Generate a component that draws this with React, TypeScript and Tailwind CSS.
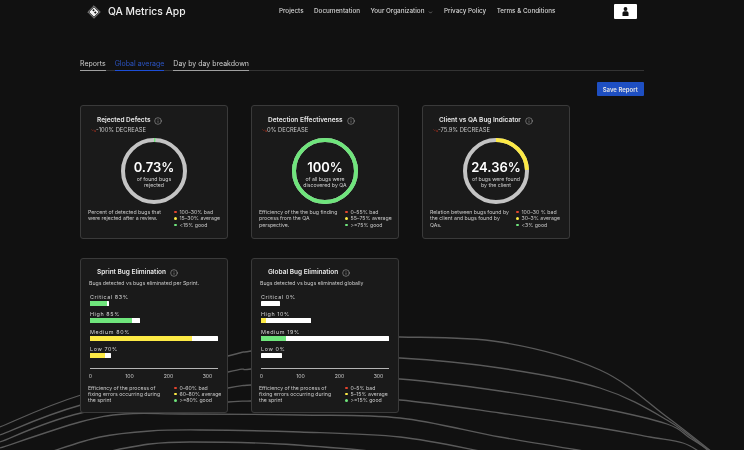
import React from "react";
import { ChevronDown, Info, TrendingDown } from "lucide-react";

type P = [number, number];
const smooth = (pts: P[]) => {
  let d = `M${pts[0][0]},${pts[0][1]}`;
  for (let i = 0; i < pts.length - 1; i++) {
    const p0 = pts[Math.max(i - 1, 0)];
    const p1 = pts[i];
    const p2 = pts[i + 1];
    const p3 = pts[Math.min(i + 2, pts.length - 1)];
    const c1 = [p1[0] + (p2[0] - p0[0]) / 6, p1[1] + (p2[1] - p0[1]) / 6];
    const c2 = [p2[0] - (p3[0] - p1[0]) / 6, p2[1] - (p3[1] - p1[1]) / 6];
    d += ` C${c1[0]},${c1[1]} ${c2[0]},${c2[1]} ${p2[0]},${p2[1]}`;
  }
  return d;
};

const waves: P[][] = [
  [[0, 427], [81, 395], [228, 356], [251, 351], [330, 338], [400, 337], [500, 342], [600, 370], [667, 417], [712, 452]],
  [[0, 435], [81, 405], [228, 372], [251, 369], [330, 358], [400, 358], [500, 368], [600, 388], [667, 420], [710, 452]],
  [[0, 442], [81, 413], [228, 388], [251, 385], [330, 378], [400, 379], [500, 391], [600, 408], [667, 424], [690, 438], [712, 452]],
  [[100, 412], [228, 402], [251, 401], [330, 398], [400, 400], [500, 413], [600, 428], [650, 437], [683, 443], [700, 452]],
  [[0, 448], [80, 422], [125, 414], [183, 414], [300, 415], [400, 418], [500, 437], [590, 452]],
  [[50, 452], [100, 437], [150, 431], [200, 430], [300, 432], [400, 437], [485, 452]],
  [[105, 452], [150, 444], [190, 442], [280, 444], [385, 452]],
];

const RED = "bg-[#e5432d]";
const YEL = "bg-[#fdea45]";
const GRN = "bg-[#6fe57c]";

function Legend({ items }: { items: string[] }) {
  const dots = [RED, YEL, GRN];
  return (
    <div className="flex flex-col">
      {items.map((t, i) => (
        <div key={t} className="flex items-center gap-[3px] h-[6.4px] text-[5.2px] leading-[6.4px] text-[#c9c9c9] whitespace-nowrap">
          <span className={`w-[2.5px] h-[2.5px] rounded-full ${dots[i]}`} />
          {t}
        </div>
      ))}
    </div>
  );
}

function Footer({ text, legend }: { text: string; legend: string[] }) {
  return (
    <div className="flex pl-[7px]">
      <p className="w-[80.5px] mr-[5.5px] text-[5.2px] leading-[6.4px] text-[#c9c9c9]">{text}</p>
      <Legend items={legend} />
    </div>
  );
}

function Title({ text }: { text: string }) {
  return (
    <div className="flex items-center gap-[4px] h-[9px] pl-[16px] text-[6.5px] font-semibold text-[#e8e8e8] whitespace-nowrap">
      {text}
      <Info size={8} strokeWidth={1.3} className="text-[#d0d0d0]" />
    </div>
  );
}

function RingCard({ title, delta, value, sub, pct, color, text, legend }: {
  title: string; delta: string; value: string; sub: string[]; pct: number; color: string; text: string; legend: string[];
}) {
  const r = 31;
  const c = 2 * Math.PI * r;
  return (
    <div className="h-[134px] bg-[#1a1a1a] border border-[#3a3a3a] rounded-[3px] pt-[10px]">
      <Title text={title} />
      <div className="flex items-center h-[8px] mt-[1px] pl-[10px] text-[5.8px] text-[#c9c9c9] whitespace-nowrap">
        <TrendingDown size={5} strokeWidth={2} className="text-[#b5341f]" />
        {delta}
      </div>
      <div className="relative w-[66px] h-[66px] mx-auto mt-[4px]">
        <svg width="66" height="66" viewBox="0 0 66 66">
          <circle cx="33" cy="33" r={r} fill="none" stroke="#c4c4c4" strokeWidth="4" />
          <circle cx="33" cy="33" r={r} fill="none" stroke={color} strokeWidth="4" strokeDasharray={`${(c * pct) / 100} ${c}`} transform="rotate(-90 33 33)" />
        </svg>
        <div className="absolute inset-0 flex flex-col items-center pt-[20.5px] text-white">
          <div className="text-[13px] leading-[16px] font-semibold">{value}</div>
          <div className="mt-[1px] text-center text-[5.2px] leading-[6px] text-[#d0d0d0] whitespace-nowrap">
            {sub.map((s) => <div key={s}>{s}</div>)}
          </div>
        </div>
      </div>
      <div className="mt-[5px]">
        <Footer text={text} legend={legend} />
      </div>
    </div>
  );
}

type Bar = { label: string; width: number; fill: number; color: string };

function BarCard({ title, sub, bars, legend }: { title: string; sub: string; bars: Bar[]; legend: string[] }) {
  return (
    <div className="h-[155px] bg-[#1a1a1a] border border-[#3a3a3a] rounded-[3px] pt-[9px]">
      <Title text={title} />
      <p className="mt-[3px] pl-[8px] h-[7px] text-[5.2px] leading-[7px] text-[#c9c9c9] whitespace-nowrap">{sub}</p>
      <div className="mt-[6px] pl-[9px] flex flex-col gap-[4px]">
        {bars.map((b) => (
          <div key={b.label} className="h-[13.4px]">
            <div className="h-[8px] text-[5.4px] leading-[8px] tracking-[0.6px] text-[#d4d4d4] whitespace-nowrap">{b.label}</div>
            <div className="h-[4.8px] bg-white rounded-[0.5px] overflow-hidden" style={{ width: b.width }}>
              <div className={`h-full ${b.color}`} style={{ width: b.fill }} />
            </div>
          </div>
        ))}
      </div>
      <div className="mt-[9px] ml-[9px] w-[128px] h-[1px] bg-[#b5b5b5]" />
      <div className="mt-[4px] ml-[-11px] flex h-[7px] text-[5.2px] leading-[7px] text-[#c9c9c9]">
        {[0, 100, 200, 300].map((t) => (
          <span key={t} className="w-[39.4px] text-center first:ml-[1px]">{t}</span>
        ))}
      </div>
      <div className="mt-[5px]">
        <Footer text="Efficiency of the process of fixing errors occurring during the sprint" legend={legend} />
      </div>
    </div>
  );
}

export default function App() {
  return (
    <div className="relative h-[450px] w-full overflow-hidden bg-[#111111] [font-family:Inter,sans-serif]">
      <svg className="absolute inset-0" width="744" height="450" viewBox="0 0 744 450" fill="none">
        {waves.map((w, i) => (
          <path key={i} d={smooth(w)} stroke="#5a5a5a" strokeWidth="1.3" />
        ))}
      </svg>
      <div className="relative will-change-transform pl-[80px] pr-[100px]">
        <header className="flex items-center h-[23px] pl-[7px]">
          <svg width="14" height="14" viewBox="0 0 14 14" className="mr-[7px]">
            <rect x="2.6" y="2.6" width="8.8" height="8.8" transform="rotate(45 7 7)" fill="none" stroke="#9a9a9a" strokeWidth="0.8" />
            <rect x="3.6" y="3.6" width="6.8" height="6.8" transform="rotate(45 7 7)" fill="#f2f2f2" />
            <rect x="5.6" y="4.4" width="1.8" height="1.8" transform="rotate(45 6.5 5.3)" fill="#111" />
            <rect x="7.4" y="6.6" width="1.8" height="1.8" transform="rotate(45 8.3 7.5)" fill="#111" />
          </svg>
          <span className="w-[171px] mt-[1px] text-[10.3px] font-medium text-[#ededed] whitespace-nowrap">QA Metrics App</span>
          <nav className="flex items-center mt-[1px] gap-[10.5px] text-[6.3px] font-medium text-[#d4d4d4] whitespace-nowrap">
            <span>Projects</span>
            <span>Documentation</span>
            <span className="flex items-center gap-[4px]">Your Organization <ChevronDown size={5} strokeWidth={2} /></span>
            <span>Privacy Policy</span>
            <span>Terms &amp; Conditions</span>
          </nav>
          <div className="ml-auto -mr-[-7px] flex items-center justify-center w-[23px] h-[15px] bg-white rounded-[1px]">
            <svg width="7" height="9" viewBox="0 0 7 9" fill="#111">
              <circle cx="3.5" cy="2" r="1.9" />
              <path d="M0.5 9V6.2C0.5 5 1.4 4.3 2.4 4.3H4.6C5.6 4.3 6.5 5 6.5 6.2V9Z" />
            </svg>
          </div>
        </header>

        <div className="mt-[35px] flex gap-[9px] border-b-[1.5px] border-[#333] h-[13px] pt-[1px] text-[7px] leading-[10px] whitespace-nowrap">
          <div className="h-[12px] border-b border-[#a0a0a0] text-[#cfcfcf]">Reports</div>
          <div className="h-[12px] border-b border-[#1d4ed8] text-[#2b54c4]">Global average</div>
          <div className="h-[12px] border-b border-[#a0a0a0] text-[#cfcfcf]">Day by day breakdown</div>
        </div>

        <div className="mt-[11px] flex justify-end">
          <button className="w-[47.5px] h-[14px] bg-[#1e4fc2] rounded-[1px] text-[6px] font-semibold text-[#e5e5e5]">Save Report</button>
        </div>

        <div className="mt-[9px] w-[490px] grid grid-cols-[148px_148px_148px] gap-x-[23px] gap-y-[19px]">
          <RingCard title="Rejected Defects" delta="-100% DECREASE" value="0.73%" sub={["of found bugs", "rejected"]} pct={0.73} color="#6fe57c"
            text="Percent of detected bugs that were rejected after a review." legend={["100–30% bad", "15–30% average", "<15% good"]} />
          <RingCard title="Detection Effectiveness" delta="0% DECREASE" value="100%" sub={["of all bugs were", "discovered by QA"]} pct={100} color="#6fe57c"
            text="Efficiency of the the bug finding process from the QA perspective." legend={["0–55% bad", "55–75% average", ">=75% good"]} />
          <RingCard title="Client vs QA Bug Indicator" delta="-75.9% DECREASE" value="24.36%" sub={["of bugs were found", "by the client"]} pct={24.36} color="#fdea45"
            text="Relation between bugs found by the client and bugs found by QAs." legend={["100–30 % bad", "30–3% average", "<3% good"]} />
          <BarCard title="Sprint Bug Elimination" sub="Bugs detected vs bugs eliminated per Sprint."
            bars={[
              { label: "Critical 83%", width: 19, fill: 17, color: GRN },
              { label: "High 85%", width: 49.5, fill: 41.7, color: GRN },
              { label: "Medium 80%", width: 128, fill: 102, color: YEL },
              { label: "Low 70%", width: 21, fill: 14.5, color: YEL },
            ]}
            legend={["0–60% bad", "60–80% average", ">=80% good"]} />
          <BarCard title="Global Bug Elimination" sub="Bugs detected vs bugs eliminated globally"
            bars={[
              { label: "Critical 0%", width: 18.5, fill: 0, color: GRN },
              { label: "High 10%", width: 49.5, fill: 5, color: YEL },
              { label: "Medium 19%", width: 128, fill: 24.7, color: GRN },
              { label: "Low 0%", width: 21, fill: 0, color: GRN },
            ]}
            legend={["0–5% bad", "5–15% average", ">=15% good"]} />
        </div>
      </div>
    </div>
  );
}
